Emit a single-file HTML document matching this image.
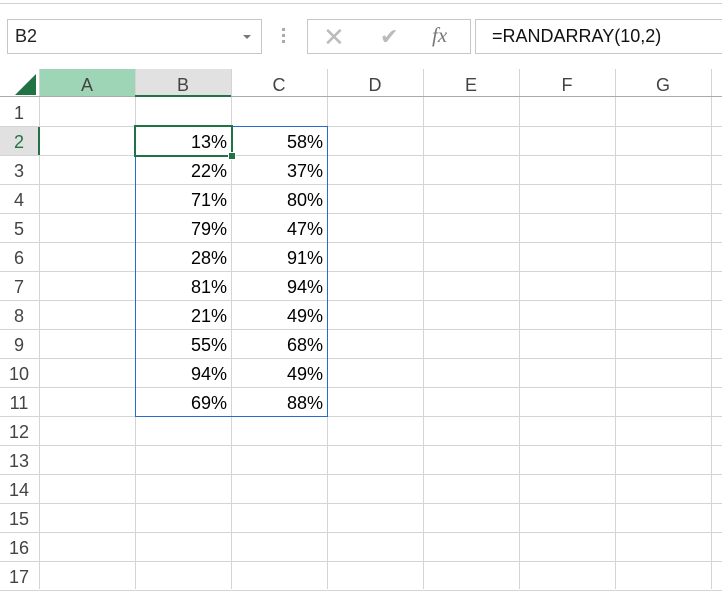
<!DOCTYPE html>
<html><head><style>
body{margin:0;width:722px;height:585px;overflow:hidden;background:#fff;font-family:"Liberation Sans",sans-serif;position:relative}
.a{position:absolute}
.v{position:absolute;top:69px;height:520px;width:1px;background:#d4d4d4}
.h{position:absolute;left:0;width:722px;height:1px;background:#d4d4d4}
.ch{position:absolute;top:69px;height:28px;line-height:32px;text-align:center;font-size:18px;color:#444;width:96px}
.rh{position:absolute;left:0;width:38px;height:29px;line-height:32px;text-align:center;font-size:18px;color:#444}
.c{position:absolute;width:90px;height:29px;line-height:32px;text-align:right;font-size:18px;color:#000}
</style></head><body>
<div class="a" style="left:0;top:3px;width:722px;height:1px;background:#d0d0d0"></div>
<div class="a" style="left:7px;top:19px;width:253px;height:33px;border:1px solid #c6c6c6"></div>
<div class="a" style="left:15px;top:26px;font-size:18px;color:#222">B2</div>
<div class="a" style="left:243px;top:35px;border-left:4px solid transparent;border-right:4px solid transparent;border-top:4px solid #777"></div>
<div class="a" style="left:282px;top:28px;width:3px;height:3px;background:#aaa;box-shadow:0 6px 0 #aaa,0 12px 0 #aaa"></div>
<div class="a" style="left:307px;top:19px;width:162px;height:33px;border:1px solid #c6c6c6"></div>
<div class="a" style="left:323px;top:22px;font-size:26px;color:#bbb">✕</div>
<div class="a" style="left:380px;top:24px;font-size:22px;color:#bbb">✔</div>
<div class="a" style="left:432px;top:23px;font-size:21px;color:#777;font-family:'Liberation Serif',serif;font-style:italic">fx</div>
<div class="a" style="left:475px;top:19px;width:247px;height:33px;border:1px solid #c6c6c6;border-right:none"></div>
<div class="a" style="left:492px;top:26px;font-size:18px;color:#111">=RANDARRAY(10,2)</div>

<div class="a" style="left:39px;top:69px;width:96px;height:28px;background:#9fd5b7"></div>
<div class="a" style="left:135px;top:69px;width:96px;height:28px;background:#e1e1e1"></div>
<div class="a" style="left:0;top:126px;width:39px;height:29px;background:#e1e1e1"></div>
<div class="a" style="left:15px;top:74px;width:0;height:0;border-left:21px solid transparent;border-bottom:21px solid #217346"></div>

<div class="v" style="left:39px"></div><div class="v" style="left:135px"></div><div class="v" style="left:231px"></div><div class="v" style="left:327px"></div><div class="v" style="left:423px"></div><div class="v" style="left:519px"></div><div class="v" style="left:615px"></div><div class="v" style="left:711px"></div>
<div class="a" style="left:0;top:96px;width:722px;height:1px;background:#ababab"></div>
<div class="a" style="left:135px;top:95px;width:96px;height:2px;background:#217346"></div>
<div class="a" style="left:38px;top:126px;width:2px;height:29px;background:#217346"></div>

<div class="ch" style="left:39px">A</div><div class="ch" style="left:135px">B</div><div class="ch" style="left:231px">C</div><div class="ch" style="left:327px">D</div><div class="ch" style="left:423px">E</div><div class="ch" style="left:519px">F</div><div class="ch" style="left:615px">G</div>

<div id="g"></div>
<script>
var h='',b=['13%','22%','71%','79%','28%','81%','21%','55%','94%','69%'],c=['58%','37%','80%','47%','91%','94%','49%','68%','49%','88%'];
for(var i=1;i<=17;i++){var y=97+(i-1)*29;h+='<div class="h" style="top:'+(y+29)+'px"></div><div class="rh" style="top:'+y+'px;'+(i==2?'color:#217346':'')+'">'+i+'</div>';
if(i>=2&&i<=11){h+='<div class="c" style="left:137px;top:'+y+'px">'+b[i-2]+'</div><div class="c" style="left:233px;top:'+y+'px">'+c[i-2]+'</div>';}}
document.getElementById('g').innerHTML=h;
</script>
<div class="a" style="left:135px;top:126px;width:191px;height:289px;border:1px solid #2a6ad0"></div>
<div class="a" style="left:134px;top:125px;width:95px;height:28px;border:2px solid #217346"></div>
<div class="a" style="left:228px;top:152px;width:6px;height:6px;background:#217346;border:1px solid #fff"></div>
</body></html>
